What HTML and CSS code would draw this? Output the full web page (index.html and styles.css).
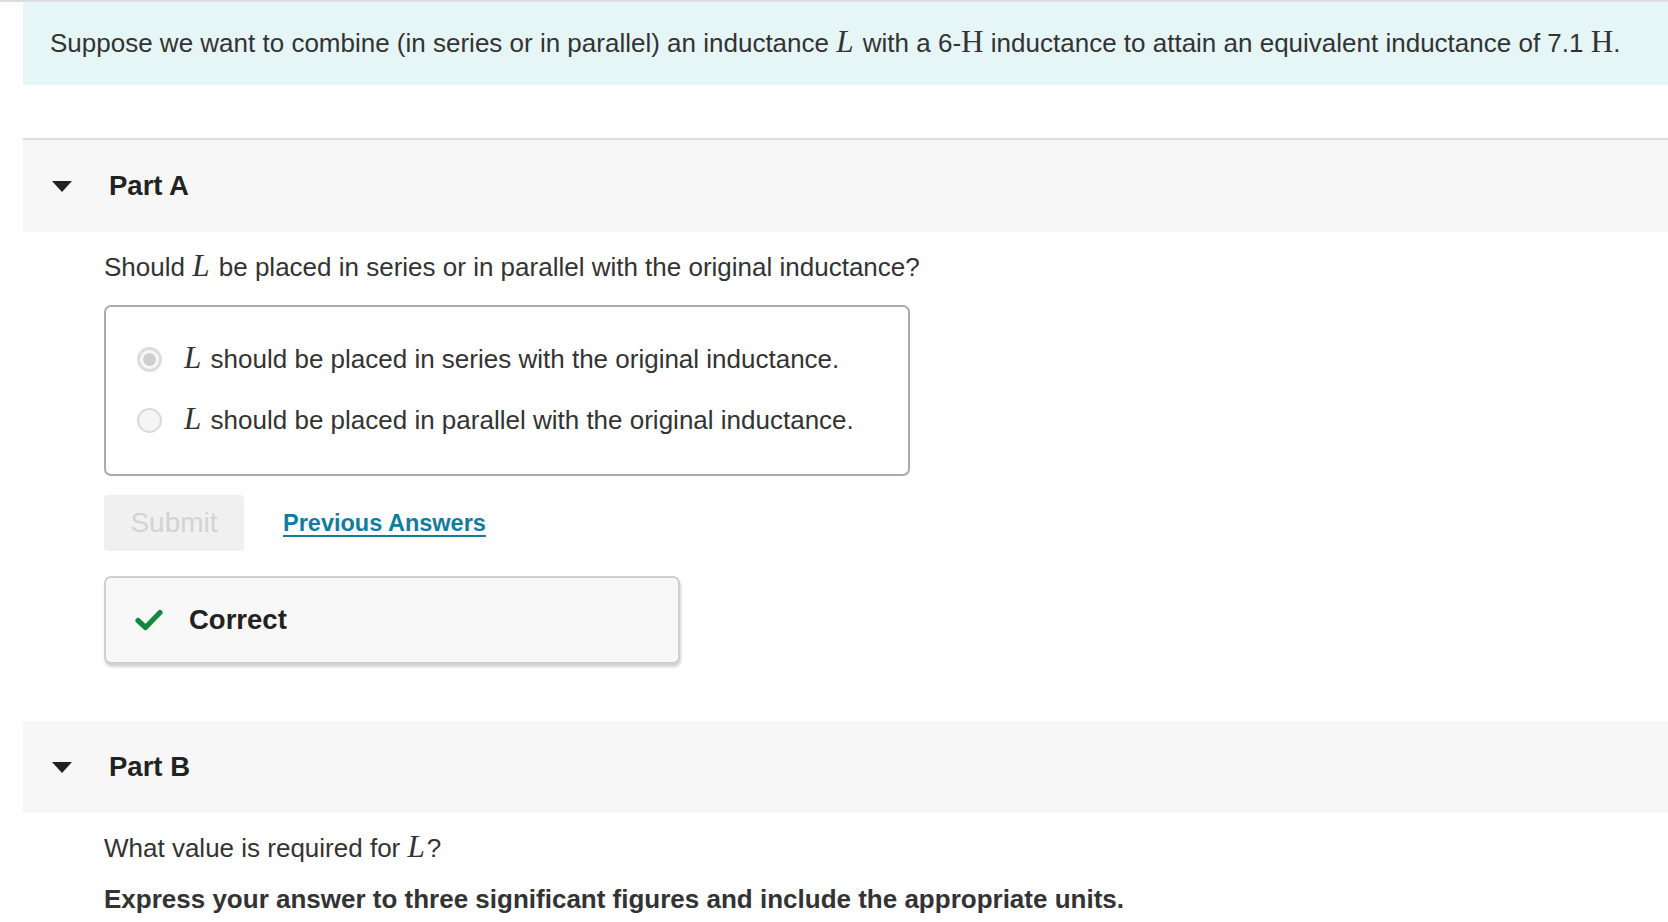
FILE: index.html
```html
<!DOCTYPE html>
<html>
<head>
<meta charset="utf-8">
<link rel="stylesheet" href="styles.css">
</head>
<body>
<div class="topline"></div>
<div class="page">
  <div class="intro">Suppose we want to combine (in series or in parallel) an inductance <span class="mi">L</span> with a 6-<span class="mn">H</span> inductance to attain an equivalent inductance of 7.1 <span class="mn">H</span>.</div>

  <section class="part part-a">
    <div class="part-head"><span class="caret"></span><span class="part-title">Part A</span></div>
    <div class="part-body">
      <p class="question">Should <span class="mi">L</span> be placed in series or in parallel with the original inductance?</p>
      <div class="options">
        <div class="option"><span class="radio checked"><span class="dot"></span></span><span class="opt-label"><span class="mi">L</span> should be placed in series with the original inductance.</span></div>
        <div class="option"><span class="radio"></span><span class="opt-label"><span class="mi">L</span> should be placed in parallel with the original inductance.</span></div>
      </div>
      <div class="actions">
        <button class="submit" disabled>Submit</button>
        <a class="prev" href="#">Previous Answers</a>
      </div>
      <div class="feedback">
        <svg class="check" width="28" height="22" viewBox="0 0 28 22"><path d="M3 11.5 L10.5 18.5 L25 3.5" fill="none" stroke="#16873f" stroke-width="5.2" stroke-linecap="round" stroke-linejoin="round"/></svg>
        <span class="fb-text">Correct</span>
      </div>
    </div>
  </section>

  <section class="part part-b">
    <div class="part-head"><span class="caret"></span><span class="part-title">Part B</span></div>
    <div class="part-body">
      <p class="question">What value is required for <span class="mi">L</span>?</p>
      <p class="instr">Express your answer to three significant figures and include the appropriate units.</p>
    </div>
  </section>
</div>
</body>
</html>
```

FILE: styles.css
```css
html, body {
  margin: 0;
  padding: 0;
  background: #ffffff;
}
body {
  font-family: "Liberation Sans", Arial, Helvetica, sans-serif;
  font-size: 26px;
  color: #333333;
}
.topline {
  height: 2px;
  background: #dcdcdc;
}
.page {
  padding-left: 23px;
}
.intro {
  box-sizing: border-box;
  height: 83px;
  background: #e6f6f7;
  padding: 26px 27px 0 27px;
  line-height: 31px;
  white-space: nowrap;
}
.mi {
  font-family: "Liberation Serif", "Times New Roman", serif;
  font-style: italic;
  font-size: 1.2em;
  line-height: 0;
  padding-right: 2px;
}
.mn {
  font-family: "Liberation Serif", "Times New Roman", serif;
  font-size: 1.2em;
  line-height: 0;
}
.part-a {
  margin-top: 53px;
  border-top: 2px solid #dcdcdc;
}
.part-head {
  background: #f7f7f7;
  height: 92px;
  display: flex;
  align-items: center;
}
.caret {
  width: 0;
  height: 0;
  border-left: 10.5px solid transparent;
  border-right: 10.5px solid transparent;
  border-top: 11px solid #222222;
  margin-left: 29px;
  margin-right: 37px;
}
.part-title {
  font-weight: bold;
  font-size: 27.5px;
  color: #222222;
}
.part-body {
  padding-left: 81px;
}
.question {
  margin: 19px 0 0 0;
  line-height: 32px;
  height: 32px;
}
.options {
  margin-top: 22px;
  width: 802px;
  border: 2px solid #ababab;
  border-radius: 7px;
  padding: 32px 0 34px 0;
  display: flex;
  flex-direction: column;
  gap: 21px;
}
.option {
  display: flex;
  align-items: center;
  height: 40px;
  padding-left: 31px;
}
.radio {
  box-sizing: border-box;
  width: 25px;
  height: 25px;
  border-radius: 50%;
  border: 2px solid #dadada;
  background: #f5f5f5;
  display: flex;
  align-items: center;
  justify-content: center;
  margin-right: 22px;
}
.radio.checked {
  border: 3px solid #dcdcdc;
  background: #f7f7f7;
}
.radio .dot {
  width: 13px;
  height: 13px;
  border-radius: 50%;
  background: #cfcfcf;
}
.actions {
  margin-top: 19px;
  display: flex;
  align-items: center;
  gap: 39px;
}
.submit {
  width: 140px;
  height: 56px;
  border: none;
  border-radius: 4px;
  background: #f0f0f0;
  color: #d3d3d3;
  font-family: "Liberation Sans", Arial, Helvetica, sans-serif;
  font-size: 28px;
  padding: 0;
}
.prev {
  color: #137b9e;
  font-weight: bold;
  font-size: 23.5px;
  text-decoration: underline;
  text-decoration-thickness: 2px;
  text-underline-offset: 4px;
}
.feedback {
  box-sizing: border-box;
  margin-top: 25px;
  width: 576px;
  height: 88px;
  border: 2px solid #cfcfcf;
  border-radius: 7px;
  background: #f8f8f8;
  box-shadow: 1px 3px 3px rgba(0,0,0,0.18);
  display: flex;
  align-items: center;
  padding-left: 29px;
  gap: 26px;
}
.check {
  display: block;
}
.fb-text {
  font-weight: bold;
  font-size: 27.5px;
  color: #222222;
}
.part-b {
  margin-top: 57px;
}
.instr {
  margin: 19px 0 0 0;
  line-height: 32px;
  font-weight: bold;
}
```
